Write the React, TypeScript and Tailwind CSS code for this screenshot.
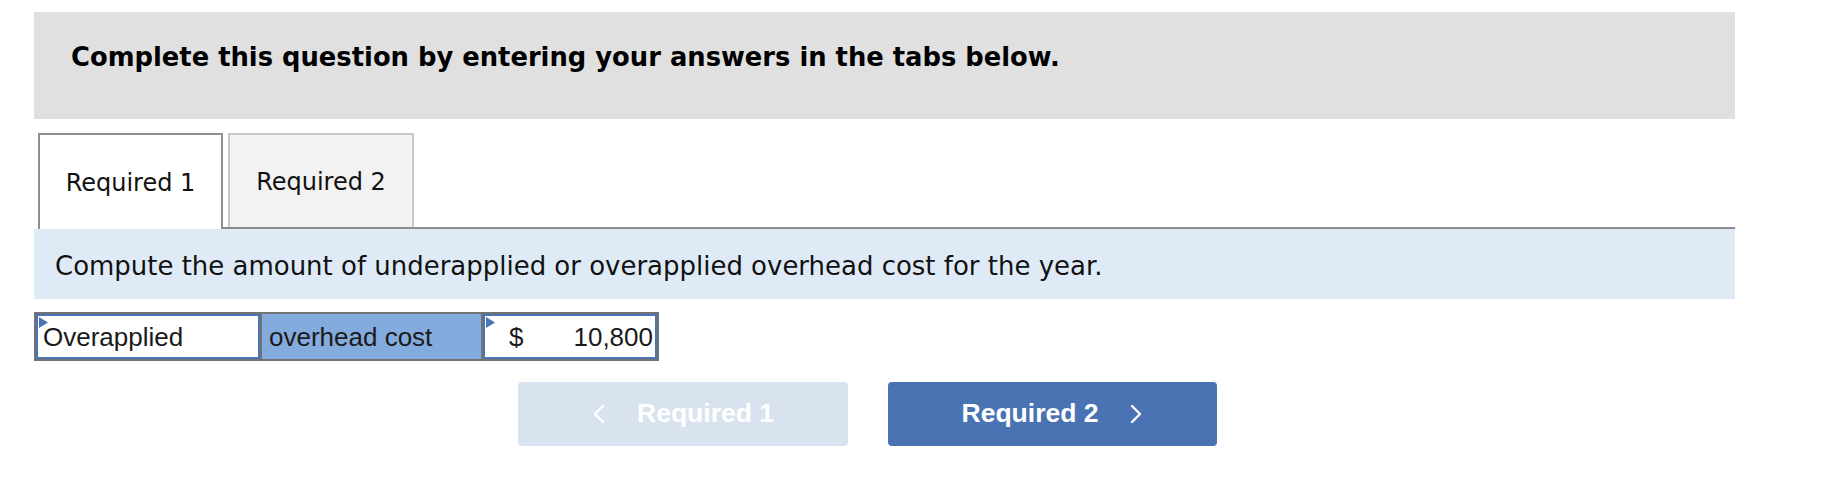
import React from "react";

const verdana = "font-['DejaVu_Sans',Verdana,sans-serif]";
const arial = "font-['Liberation_Sans',Arial,sans-serif]";

const Marker = () => (
  <svg
    className="absolute left-[1px] top-[1px]"
    width="9"
    height="11"
    viewBox="0 0 9 11"
  >
    <polygon points="0,0 9,5.5 0,11" fill="#4a74b4" />
  </svg>
);

const Chevron = ({ dir }: { dir: "left" | "right" }) => (
  <svg width="14" height="20" viewBox="0 0 14 20" fill="none">
    <path
      d={dir === "left" ? "M11 2 L3 10 L11 18" : "M3 2 L11 10 L3 18"}
      stroke="white"
      strokeWidth="2.4"
      strokeLinecap="round"
      strokeLinejoin="round"
    />
  </svg>
);

export default function App() {
  return (
    <div className="min-h-[502px] w-[1846px] bg-white pt-[12px]">
      <div className="ml-[34px] w-[1701px]">
        {/* Instructions */}
        <div className="h-[107px] bg-[#e0e0e0] pl-[37px] pt-[30px]">
          <h1 className={`${verdana} text-[25.8px] font-bold leading-[30px] text-black`}>
            Complete this question by entering your answers in the tabs below.
          </h1>
        </div>

        {/* Tabs */}
        <div className="ml-[4px] mt-[14px] flex items-end gap-[5px] border-b-2 border-[#8c8c8c]">
          <div
            className={`${verdana} relative -mb-[2px] flex h-[96px] w-[185px] items-center justify-center border-2 border-b-0 border-[#909090] bg-white pt-[2px] text-[24px] text-[#111]`}
          >
            Required 1
          </div>
          <div
            className={`${verdana} flex h-[94px] w-[186px] items-center justify-center border-2 border-b-0 border-[#c8c8c8] bg-[#f2f2f2] pt-[2px] text-[24px] text-[#111]`}
          >
            Required 2
          </div>
        </div>

        {/* Question */}
        <div className="h-[70px] bg-[#deebf7] pl-[21px] pt-[22px]">
          <p className={`${verdana} text-[25.97px] leading-[30px] text-[#111]`}>
            Compute the amount of underapplied or overapplied overhead cost for the year.
          </p>
        </div>

        {/* Answer row */}
        <div className={`${arial} mt-[13px] flex h-[49px] w-[625px] gap-[2px] bg-[#727272] p-[2px] text-[26px] text-[#1a1a1a]`}>
          <div className="relative flex w-[224px] items-center border-2 border-[#4a74b4] bg-white pl-[5px] pt-[2px]">
            <Marker />
            Overapplied
          </div>
          <div className="flex w-[219px] items-center bg-[#84abdd] pl-[7px] pt-[2px]">
            overhead cost
          </div>
          <div className="relative flex w-[174px] items-center border-2 border-[#4a74b4] bg-white pl-[24px] pr-[2px] pt-[2px]">
            <Marker />
            <span>$</span>
            <span className="ml-auto">10,800</span>
          </div>
        </div>

        {/* Navigation */}
        <div className={`${arial} ml-[484px] mt-[21px] flex gap-[40px] text-[26.5px] font-bold text-white`}>
          <button className="flex h-[64px] w-[330px] items-center justify-center gap-[31px] rounded-[4px] bg-[#d9e3f0]">
            <Chevron dir="left" />
            <span>Required 1</span>
          </button>
          <button className="flex h-[64px] w-[329px] items-center justify-center gap-[31px] rounded-[4px] bg-[#4a73b3]">
            <span>Required 2</span>
            <Chevron dir="right" />
          </button>
        </div>
      </div>
    </div>
  );
}
